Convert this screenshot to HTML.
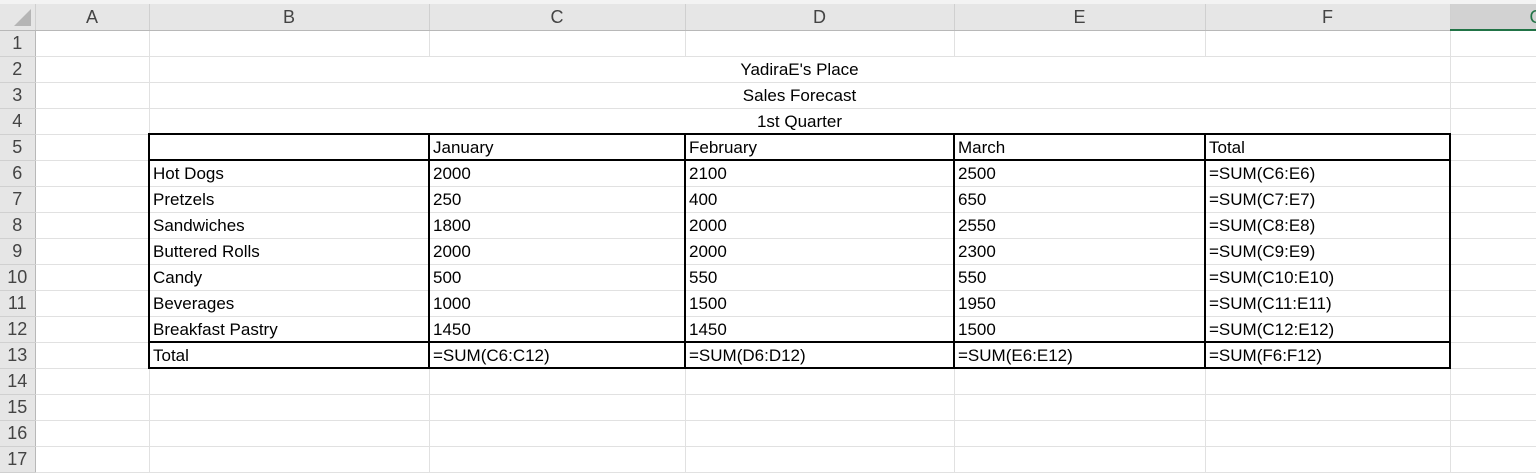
<!DOCTYPE html>
<html><head><meta charset="utf-8"><style>
*{margin:0;padding:0;box-sizing:border-box}
body{width:1536px;height:469px;overflow:hidden;background:#fff;font-family:"Liberation Sans",sans-serif;}
.top{position:absolute;left:0;top:0;width:1536px;height:4px;background:#f3f3f3}
table{position:absolute;left:0;top:4px;border-collapse:collapse;table-layout:fixed;width:1536px}
td{height:26px;border-right:1px solid #e1e1e1;border-bottom:1px solid #e1e1e1;font-size:17px;line-height:20px;color:#000;padding:2px 0 0 3px;white-space:nowrap;overflow:hidden;vertical-align:middle}
tr.h td{height:26px;background:#e6e6e6;color:#444;text-align:center;border-right:1px solid #d0d0d0;border-bottom:1px solid #b8b8b8;padding:0;line-height:24px;font-size:18px}
td.r{background:#e6e6e6;color:#444;text-align:center;border-right:1px solid #b8b8b8;border-bottom:1px solid #d0d0d0;padding:0;font-size:18px}
td.g{background:#d2d2d2 !important;color:#217346 !important;border-bottom:2px solid #217346 !important;text-align:left !important;padding-left:79px !important}
td.c{text-align:center;padding:2px 0 0 0}
td.k{border-left:2px solid #000;border-right:2px solid #000}
tr.t td.k{border-top:2px solid #000;border-bottom:2px solid #000}
svg{display:block}
</style></head><body>
<div class="top"></div>
<table>
<colgroup><col style="width:35px"><col style="width:114px"><col style="width:280px"><col style="width:256px"><col style="width:269px"><col style="width:251px"><col style="width:245px"><col style="width:86px"></colgroup>
<tr class="h"><td><svg width="34" height="24"><polygon points="31,4 31,21 14,21" fill="#b5b5b5"/></svg></td><td>A</td><td>B</td><td>C</td><td>D</td><td>E</td><td>F</td><td class="g">G</td></tr>
<tr><td class="r">1</td><td></td><td></td><td></td><td></td><td></td><td></td><td></td></tr>
<tr><td class="r">2</td><td></td><td colspan="5" class="c">YadiraE's Place</td><td></td></tr>
<tr><td class="r">3</td><td></td><td colspan="5" class="c">Sales Forecast</td><td></td></tr>
<tr><td class="r">4</td><td></td><td colspan="5" class="c" style="border-bottom:2px solid #000">1st Quarter</td><td></td></tr>
<tr class="t"><td class="r">5</td><td></td><td class="k"></td><td class="k">January</td><td class="k">February</td><td class="k">March</td><td class="k">Total</td><td style="border-left:2px solid #000"></td></tr>
<tr><td class="r">6</td><td></td><td class="k">Hot Dogs</td><td class="k">2000</td><td class="k">2100</td><td class="k">2500</td><td class="k">=SUM(C6:E6)</td><td></td></tr>
<tr><td class="r">7</td><td></td><td class="k">Pretzels</td><td class="k">250</td><td class="k">400</td><td class="k">650</td><td class="k">=SUM(C7:E7)</td><td></td></tr>
<tr><td class="r">8</td><td></td><td class="k">Sandwiches</td><td class="k">1800</td><td class="k">2000</td><td class="k">2550</td><td class="k">=SUM(C8:E8)</td><td></td></tr>
<tr><td class="r">9</td><td></td><td class="k">Buttered Rolls</td><td class="k">2000</td><td class="k">2000</td><td class="k">2300</td><td class="k">=SUM(C9:E9)</td><td></td></tr>
<tr><td class="r">10</td><td></td><td class="k">Candy</td><td class="k">500</td><td class="k">550</td><td class="k">550</td><td class="k">=SUM(C10:E10)</td><td></td></tr>
<tr><td class="r">11</td><td></td><td class="k">Beverages</td><td class="k">1000</td><td class="k">1500</td><td class="k">1950</td><td class="k">=SUM(C11:E11)</td><td></td></tr>
<tr><td class="r">12</td><td></td><td class="k">Breakfast Pastry</td><td class="k">1450</td><td class="k">1450</td><td class="k">1500</td><td class="k">=SUM(C12:E12)</td><td></td></tr>
<tr class="t"><td class="r">13</td><td></td><td class="k">Total</td><td class="k">=SUM(C6:C12)</td><td class="k">=SUM(D6:D12)</td><td class="k">=SUM(E6:E12)</td><td class="k">=SUM(F6:F12)</td><td style="border-left:2px solid #000"></td></tr>
<tr><td class="r">14</td><td></td><td></td><td></td><td></td><td></td><td></td><td></td></tr>
<tr><td class="r">15</td><td></td><td></td><td></td><td></td><td></td><td></td><td></td></tr>
<tr><td class="r">16</td><td></td><td></td><td></td><td></td><td></td><td></td><td></td></tr>
<tr><td class="r">17</td><td></td><td></td><td></td><td></td><td></td><td></td><td></td></tr>
</table>
</body></html>
